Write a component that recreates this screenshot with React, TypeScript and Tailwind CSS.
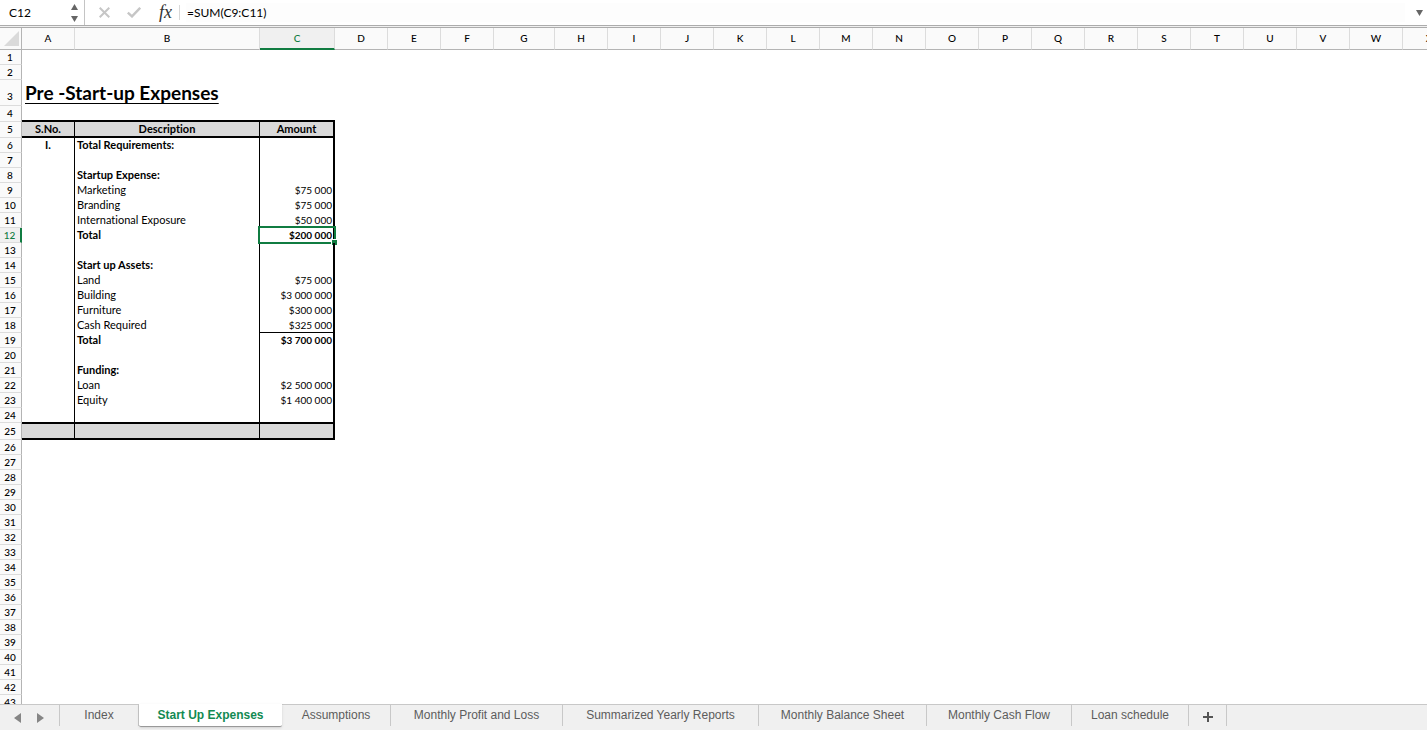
import clsx from "clsx";

type Line = { text?: string; amount?: string; no?: string; bold?: boolean };

const columns = "ABCDEFGHIJKLMNOPQRSTUVWX".split("");

const lines: Record<number, Line> = {
    5: { no: "S.No.", text: "Description", amount: "Amount", bold: true },
    6: { no: "I.", text: "Total Requirements:", bold: true },
    8: { text: "Startup Expense:", bold: true },
    9: { text: "Marketing", amount: "$75 000" },
    10: { text: "Branding", amount: "$75 000" },
    11: { text: "International Exposure", amount: "$50 000" },
    12: { text: "Total", amount: "$200 000", bold: true },
    14: { text: "Start up Assets:", bold: true },
    15: { text: "Land", amount: "$75 000" },
    16: { text: "Building", amount: "$3 000 000" },
    17: { text: "Furniture", amount: "$300 000" },
    18: { text: "Cash Required", amount: "$325 000" },
    19: { text: "Total", amount: "$3 700 000", bold: true },
    21: { text: "Funding:", bold: true },
    22: { text: "Loan", amount: "$2 500 000" },
    23: { text: "Equity", amount: "$1 400 000" },
};

const tabs = [
    { name: "Index", width: "w-[79px]" },
    { name: "Start Up Expenses", width: "w-[143px]" },
    { name: "Assumptions", width: "w-[109px]" },
    { name: "Monthly Profit and Loss", width: "w-[172px]" },
    { name: "Summarized Yearly Reports", width: "w-[196px]" },
    { name: "Monthly Balance Sheet", width: "w-[168px]" },
    { name: "Monthly Cash Flow", width: "w-[145px]" },
    { name: "Loan schedule", width: "w-[117px]" },
];

function columnWidth(column: string) {
    if (column === "B") return "w-[185px]";
    if (column === "C") return "w-[75px]";
    if (column === "G") return "w-[61px]";
    return "w-[53px]";
}

function rowHeight(row: number) {
    if (row === 3) return "h-[26px]";
    if (row === 4 || row === 5) return "h-[16px]";
    if (row === 25) return "h-[17px]";
    return "h-[15px]";
}

// horizontal rules of the bordered block, the one above row 25 is split with row 24
function rules(row: number) {
    return clsx(
        (row === 4 || row === 5 || row === 25) && "border-b-2",
        row === 24 && "border-b",
        row === 25 && "border-t",
        (row === 5 || row === 25) && "bg-[#d9d9d9]",
    );
}

function FormulaBar() {
    return (
        <div className="flex h-[26px] shrink-0 items-stretch border-b border-[#acacac] bg-white">
            <div className="flex w-[85px] shrink-0 items-center border-r border-[#c4c4c4] pl-[9px]">
                <input
                    aria-label="Name box"
                    defaultValue="C12"
                    className="w-14 bg-transparent text-[12px] leading-4 outline-none"
                />
                <div className="ml-[6px] flex flex-col gap-[6px]">
                    <button aria-label="Previous name" className="block">
                        <svg width="7" height="6" viewBox="0 0 7 6" fill="#666">
                            <path d="M3.5 0 7 6H0z" />
                        </svg>
                    </button>
                    <button aria-label="Next name" className="block">
                        <svg width="7" height="6" viewBox="0 0 7 6" fill="#666">
                            <path d="M0 0h7L3.5 6z" />
                        </svg>
                    </button>
                </div>
            </div>
            <div className="flex shrink-0 items-center pl-[14px]">
                <button aria-label="Cancel">
                    <svg width="11" height="11" viewBox="0 0 11 11" stroke="#c6c6c6" strokeWidth="2" fill="none">
                        <path d="M.7.7l9.6 9.6M10.3.7.7 10.3" />
                    </svg>
                </button>
                <button aria-label="Enter" className="ml-[17px]">
                    <svg width="14" height="11" viewBox="0 0 14 11" stroke="#c6c6c6" strokeWidth="2.4" fill="none">
                        <path d="M.8 5.6 5 9.4 13.2.8" />
                    </svg>
                </button>
                <button
                    aria-label="Insert function"
                    className="ml-[16px] w-[17px] pb-[2px] font-['Liberation_Serif',serif] text-[18px] leading-5 text-[#333] italic"
                >
                    fx
                </button>
                <span className="ml-[5px] h-[15px] w-px bg-[#d8d8d8]" />
            </div>
            <input
                aria-label="Formula"
                defaultValue="=SUM(C9:C11)"
                className="my-[3px] ml-[6px] min-w-0 flex-1 bg-[#fdfdfd] pl-px text-[12px] outline-none"
            />
            <button aria-label="Expand formula bar" className="flex w-[22px] items-center justify-end pr-1">
                <svg width="7" height="6" viewBox="0 0 7 6" fill="#666">
                    <path d="M0 0h7L3.5 6z" />
                </svg>
            </button>
        </div>
    );
}

function Row({ row }: { row: number }) {
    const line = lines[row] ?? {};
    const framed = row >= 5 && row <= 25;
    const selected = row === 12;
    const cell = clsx("border-black p-0 align-top leading-[13px]", rules(row), line.bold && "font-bold");

    return (
        <tr className={rowHeight(row)}>
            <th
                scope="row"
                className={clsx(
                    "border-b border-b-[#dcdcdc] p-0 pr-px text-[10px] leading-[13px] font-medium",
                    row === 3 ? "pb-[2px] align-bottom" : row === 25 ? "align-middle" : "pt-px align-top",
                    selected
                        ? "border-r-2 border-r-[#107c41] bg-[#f0f0f0] text-[#107c41]"
                        : "border-r border-r-[#b4b4b4] bg-[#fafafa]",
                )}
            >
                {row}
            </th>
            <td className={clsx(cell, "text-center", framed && "border-r")}>
                {row === 3 ? (
                    <h1 className="pt-px pl-[3px] text-left text-[19px] leading-6 font-bold whitespace-nowrap underline decoration-1 underline-offset-3">
                        Pre -Start-up Expenses
                    </h1>
                ) : (
                    line.no
                )}
            </td>
            <td className={clsx(cell, framed && "border-r", row === 5 ? "text-center" : "pl-[2px]")}>{line.text}</td>
            <td
                className={clsx(
                    cell,
                    "relative whitespace-nowrap",
                    framed && "border-r-2",
                    row === 18 && "border-b",
                    row === 5 ? "text-center" : "pt-px pr-px text-right text-[10px]",
                )}
            >
                {line.amount}
                {selected && (
                    <span className="absolute -top-[2px] -right-[3px] -bottom-px -left-[2px] border-2 border-[#107c41]">
                        <span className="absolute -right-[3px] -bottom-[3px] size-[6px] border-t border-l border-white bg-[#107c41]" />
                    </span>
                )}
            </td>
            {columns.slice(3).map((column) => (
                <td key={column} className="p-0" />
            ))}
        </tr>
    );
}

function Sheet() {
    return (
        <div className="min-h-0 flex-1 overflow-hidden">
            <table className="w-[1456px] table-fixed border-separate border-spacing-0 text-[11px] [font-variant-ligatures:none]">
                <thead>
                    <tr className="h-[22px]">
                        <th className="w-[22px] border-r border-b border-[#b4b4b4] bg-[#fafafa] p-0">
                            <svg className="ml-[4px]" width="15" height="15" viewBox="0 0 15 15" fill="#dadada">
                                <path d="M15 0v15H0z" />
                            </svg>
                        </th>
                        {columns.map((column) => (
                            <th
                                key={column}
                                scope="col"
                                className={clsx(
                                    "border-r border-r-[#dcdcdc] p-0 text-[10px] leading-[13px] font-medium",
                                    columnWidth(column),
                                    column === "C"
                                        ? "border-b-2 border-b-[#107c41] bg-[#f0f0f0] text-[#107c41]"
                                        : "border-b border-b-[#b4b4b4] bg-[#fafafa]",
                                )}
                            >
                                {column}
                            </th>
                        ))}
                    </tr>
                </thead>
                <tbody>
                    {Array.from({ length: 43 }, (_, i) => (
                        <Row key={i} row={i + 1} />
                    ))}
                </tbody>
            </table>
        </div>
    );
}

function SheetTabs() {
    return (
        <nav className="flex h-[26px] shrink-0 items-start border-t border-[#c8c8c8] bg-[#f0f0f0] font-['Liberation_Sans',Arial,sans-serif] text-[12px] text-[#5c5c5c]">
            <div className="flex h-[21px] w-[60px] shrink-0 items-end gap-4 border-r border-[#c8c8c8] pb-[3px] pl-[14px]">
                <button aria-label="Previous sheet">
                    <svg className="block" width="7" height="10" viewBox="0 0 7 10" fill="#858585">
                        <path d="M7 0v10L0 5z" />
                    </svg>
                </button>
                <button aria-label="Next sheet">
                    <svg className="block" width="7" height="10" viewBox="0 0 7 10" fill="#858585">
                        <path d="M0 0v10l7-5z" />
                    </svg>
                </button>
            </div>
            {tabs.map(({ name, width }) => (
                <button
                    key={name}
                    className={clsx(
                        "shrink-0 whitespace-nowrap",
                        width,
                        name === "Start Up Expenses"
                            ? "-mt-px h-[23px] rounded-b-xs border-b border-[#999] bg-white font-bold text-[#128a52] shadow-sm"
                            : "h-[21px] border-r border-[#c8c8c8] pb-[2px]",
                    )}
                >
                    {name}
                </button>
            ))}
            <button
                aria-label="Add sheet"
                className="flex h-[21px] w-[38px] shrink-0 items-end justify-center border-r border-[#c8c8c8] pb-[4px]"
            >
                <svg width="10" height="10" viewBox="0 0 10 10" stroke="#555" strokeWidth="2">
                    <path d="M5 0v10M0 5h10" />
                </svg>
            </button>
        </nav>
    );
}

export default function App() {
    return (
        <div className="flex h-screen flex-col overflow-hidden bg-white font-['Lato','Open_Sans',sans-serif] text-black">
            <FormulaBar />
            <div className="h-[2px] shrink-0 border-b border-[#acacac] bg-[#f0f0f0]" />
            <Sheet />
            <SheetTabs />
        </div>
    );
}
